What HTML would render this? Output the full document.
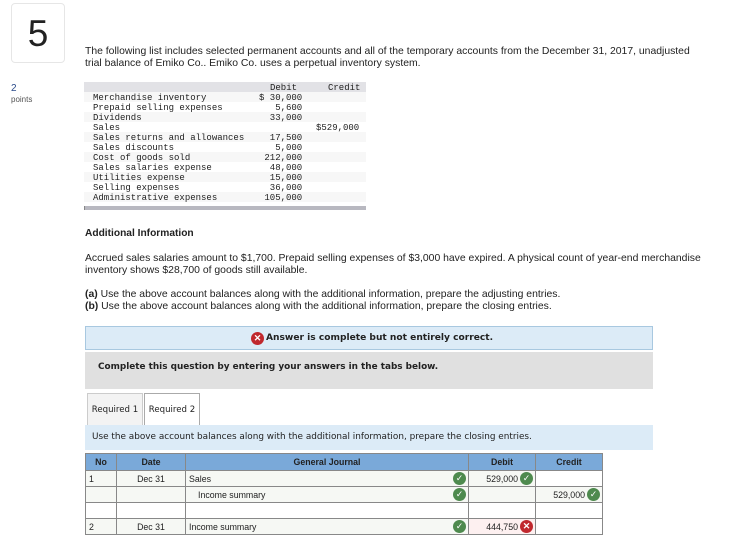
<!DOCTYPE html>
<html><head><meta charset="utf-8">
<style>
*{margin:0;padding:0;box-sizing:border-box}
body{width:731px;height:536px;overflow:hidden;background:#fff;font-family:"Liberation Sans",sans-serif;color:#222;position:relative}
.a{position:absolute;white-space:nowrap}
.t{font-size:10.4px;line-height:11px}
.m{font-family:"Liberation Mono",monospace;font-size:9px;color:#222}
pre.a{white-space:pre}
.tb{position:absolute;left:84px;top:82px;width:282px;height:128px;background:#fff}
.tr{position:absolute;left:0;width:282px;height:10px}
.chk{position:absolute;width:13px;height:13px;border-radius:50%;background:#4e8a4e;color:#fff;font-size:9px;line-height:13px;text-align:center}
.x{position:absolute;width:13px;height:13px;border-radius:50%;background:#c0282e;color:#fff;font-size:9px;line-height:13px;text-align:center;font-weight:bold}
.jt{position:absolute;left:85px;top:453px;border-collapse:collapse;font-size:8.8px}
.jt td{border:1px solid #888;height:16px;padding:0 3px;position:relative}
.jt tr.h td{background:#7aa9d9;font-weight:bold;text-align:center;height:17px}
</style></head><body>
<div class="a" style="left:11px;top:3px;width:54px;height:60px;border:1px solid #e6e6e6;border-radius:4px;font-size:37px;line-height:60px;text-align:center;color:#222">5</div>
<div class="a" style="left:11px;top:83px;font-size:10px;color:#2a4a8a">2</div>
<div class="a" style="left:11px;top:95px;font-size:8px;color:#555">points</div>
<div class="a t" style="left:85px;top:46px">The following list includes selected permanent accounts and all of the temporary accounts from the December 31, 2017, unadjusted</div>
<div class="a t" style="left:85px;top:58px">trial balance of Emiko Co.. Emiko Co. uses a perpetual inventory system.</div>

<div class="tb">
<div class="tr" style="top:0;background:#e2e2e6"></div>
<div class="tr" style="top:10px;background:#f7f7f7"></div>
<div class="tr" style="top:30px;background:#f7f7f7"></div>
<div class="tr" style="top:50px;background:#f7f7f7"></div>
<div class="tr" style="top:70px;background:#f7f7f7"></div>
<div class="tr" style="top:90px;background:#f7f7f7"></div>
<div class="tr" style="top:110px;background:#f7f7f7"></div>
<div style="position:absolute;left:0;top:124px;width:282px;height:4px;background:#b8b8c0;border-left:1px solid #888"></div>
<div class="a m" style="left:186px;top:1px;line-height:10px">Debit</div>
<div class="a m" style="left:244px;top:1px;line-height:10px">Credit</div>
<pre class="a m" style="left:9px;top:11px;line-height:10px">Merchandise inventory
Prepaid selling expenses
Dividends
Sales
Sales returns and allowances
Sales discounts
Cost of goods sold
Sales salaries expense
Utilities expense
Selling expenses
Administrative expenses</pre>
<pre class="a m" style="left:175px;top:11px;line-height:10px">$ 30,000
   5,600
  33,000

  17,500
   5,000
 212,000
  48,000
  15,000
  36,000
 105,000</pre>
<div class="a m" style="left:232px;top:41px;line-height:10px">$529,000</div>
</div>

<div class="a" style="left:85px;top:228px;font-size:10.2px;font-weight:bold">Additional Information</div>
<div class="a t" style="left:85px;top:253px">Accrued sales salaries amount to $1,700. Prepaid selling expenses of $3,000 have expired. A physical count of year-end merchandise</div>
<div class="a t" style="left:85px;top:265px">inventory shows $28,700 of goods still available.</div>
<div class="a t" style="left:85px;top:289px"><b>(a)</b> Use the above account balances along with the additional information, prepare the adjusting entries.</div>
<div class="a t" style="left:85px;top:301px"><b>(b)</b> Use the above account balances along with the additional information, prepare the closing entries.</div>

<div class="a" style="left:85px;top:326px;width:568px;height:24px;background:#dcebf7;border:1px solid #a8c8e0"></div>
<div class="x" style="left:251px;top:332px">✕</div>
<div class="a" style="left:266px;top:332px;font-family:'DejaVu Sans',sans-serif;font-size:9.1px;font-weight:bold;line-height:12px">Answer is complete but not entirely correct.</div>
<div class="a" style="left:85px;top:352px;width:568px;height:37px;background:#e0e0e0"></div>
<div class="a" style="left:98px;top:362px;font-family:'DejaVu Sans',sans-serif;font-size:8.9px;font-weight:bold">Complete this question by entering your answers in the tabs below.</div>

<div class="a" style="left:87px;top:393px;width:56px;height:33px;background:#f3f3f3;border:1px solid #ccc;border-bottom:none;font-family:'DejaVu Sans',sans-serif;font-size:8.6px;line-height:32px;text-align:center">Required 1</div>
<div class="a" style="left:144px;top:393px;width:56px;height:33px;background:#fff;border:1px solid #aaa;border-bottom:none;font-family:'DejaVu Sans',sans-serif;font-size:8.6px;line-height:32px;text-align:center">Required 2</div>
<div class="a" style="left:85px;top:425px;width:568px;height:25px;background:#dcebf7"></div>
<div class="a" style="left:92px;top:432px;font-family:'DejaVu Sans',sans-serif;font-size:8.9px">Use the above account balances along with the additional information, prepare the closing entries.</div>

<table class="jt">
<tr class="h"><td style="width:31px">No</td><td style="width:69px">Date</td><td style="width:283px">General Journal</td><td style="width:67px">Debit</td><td style="width:67px">Credit</td></tr>
<tr style="background:#f6f8f4"><td>1</td><td style="text-align:center">Dec 31</td><td>Sales<span class="chk" style="right:2px;top:1px">✓</span></td><td style="text-align:right;padding-right:17px">529,000<span class="chk" style="right:2px;top:1px">✓</span></td><td style="background:#fff"></td></tr>
<tr style="background:#f6f8f4"><td></td><td></td><td style="padding-left:12px">Income summary<span class="chk" style="right:2px;top:1px">✓</span></td><td></td><td style="text-align:right;padding-right:17px">529,000<span class="chk" style="right:2px;top:1px">✓</span></td></tr>
<tr><td></td><td></td><td></td><td></td><td></td></tr>
<tr style="background:#f6f8f4"><td>2</td><td style="text-align:center">Dec 31</td><td>Income summary<span class="chk" style="right:2px;top:1px">✓</span></td><td style="background:#fdf0f0;text-align:right;padding-right:17px">444,750<span class="x" style="right:2px;top:1px">✕</span></td><td style="background:#fff"></td></tr>
</table>
</body></html>
